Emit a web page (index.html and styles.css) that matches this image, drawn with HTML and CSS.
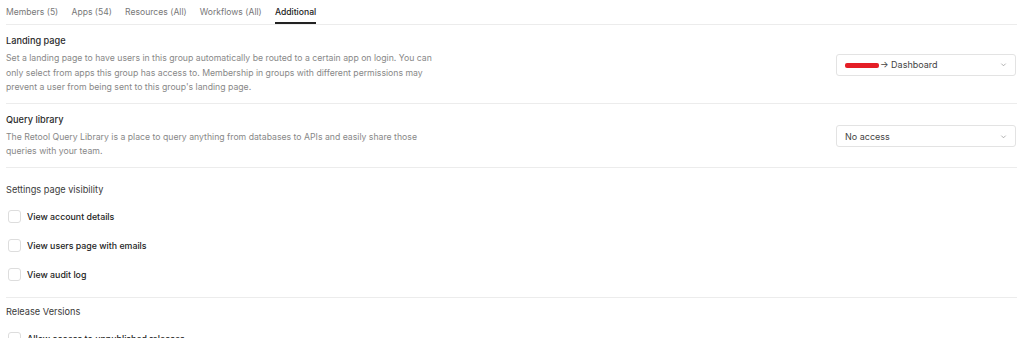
FILE: index.html
```html
<!DOCTYPE html>
<html lang="en">
<head>
    <meta charset="UTF-8" />
    <meta name="viewport" content="width=device-width, initial-scale=1" />
    <title>Group settings | Additional</title>
    <link rel="stylesheet" href="styles.css">
</head>
<body>

    <nav class="tabs">
        <a class="tab">Members (5)</a>
        <a class="tab">Apps (54)</a>
        <a class="tab">Resources (All)</a>
        <a class="tab">Workflows (All)</a>
        <a class="tab active">Additional</a>
    </nav>

    <section class="row">
        <div class="info">
            <h4>Landing page</h4>
            <p>Set a landing page to have users in this group automatically be routed to a certain app on login. You can only select from apps this group has access to. Membership in groups with different permissions may prevent a user from being sent to this group's landing page.</p>
        </div>
        <div class="select">
            <span><span class="redacted"></span>→ Dashboard</span>
            <svg class="chevron" viewBox="0 0 8 8" width="7" height="7"><path d="M1.5 3 L4 5.5 L6.5 3" fill="none" stroke="#9a9a9a" stroke-width="0.9"/></svg>
        </div>
    </section>

    <section class="row">
        <div class="info">
            <h4>Query library</h4>
            <p>The Retool Query Library is a place to query anything from databases to APIs and easily share those queries with your team.</p>
        </div>
        <div class="select">
            <span>No access</span>
            <svg class="chevron" viewBox="0 0 8 8" width="7" height="7"><path d="M1.5 3 L4 5.5 L6.5 3" fill="none" stroke="#9a9a9a" stroke-width="0.9"/></svg>
        </div>
    </section>

    <section class="block">
        <h5>Settings page visibility</h5>
        <label class="check"><span class="box"></span>View account details</label>
        <label class="check"><span class="box"></span>View users page with emails</label>
        <label class="check"><span class="box"></span>View audit log</label>
    </section>

    <section class="block release">
        <h5>Release Versions</h5>
        <label class="check"><span class="box"></span>Allow access to unpublished releases</label>
    </section>

</body>
</html>
```

FILE: styles.css
```css
body { font-family: Inter, "Noto Sans", sans-serif; margin: 0; padding: 0 6px; color: #222; background: #fff; height: 338px; overflow: hidden; }
.tabs { display: flex; gap: 13.2px; border-bottom: 1px solid #ececec; height: 24px; align-items: stretch; }
.tab { font-size: 8.6px; color: #777; padding-top: 7px; box-sizing: border-box; }
.tab.active { color: #222; font-weight: 500; border-bottom: 2px solid #222; }
.row { display: flex; justify-content: space-between; align-items: center; border-bottom: 1px solid #ececec; padding: 10px 0 8px; }
.info { width: 430px; }
h4 { margin: 0 0 5px; font-size: 9.2px; font-weight: 500; color: #2a2a2a; }
h5 { margin: 0 0 7px; font-size: 9.2px; font-weight: 400; color: #3a3a3a; }
p { margin: 0; font-size: 8.7px; line-height: 14.5px; color: #888; }
.select { width: 180px; height: 22px; box-sizing: border-box; border: 1px solid #e3e3e3; border-radius: 3px; display: flex; align-items: center; justify-content: space-between; padding: 0 8px; font-size: 9px; color: #444; margin-right: 1px; }
.redacted { display: inline-block; width: 34px; height: 5px; background: #e41e26; border-radius: 2px; vertical-align: middle; margin-right: 1px; }
.block { border-bottom: 1px solid #ececec; padding: 16px 0 8px; }
.block.release { padding-top: 8px; border-bottom: none; }
.check { display: flex; align-items: center; gap: 6px; font-size: 8.8px; font-weight: 500; color: #222; height: 29px; padding-left: 2px; }
.box { width: 11px; height: 11px; border: 1px solid #ddd; border-radius: 3px; }
```
